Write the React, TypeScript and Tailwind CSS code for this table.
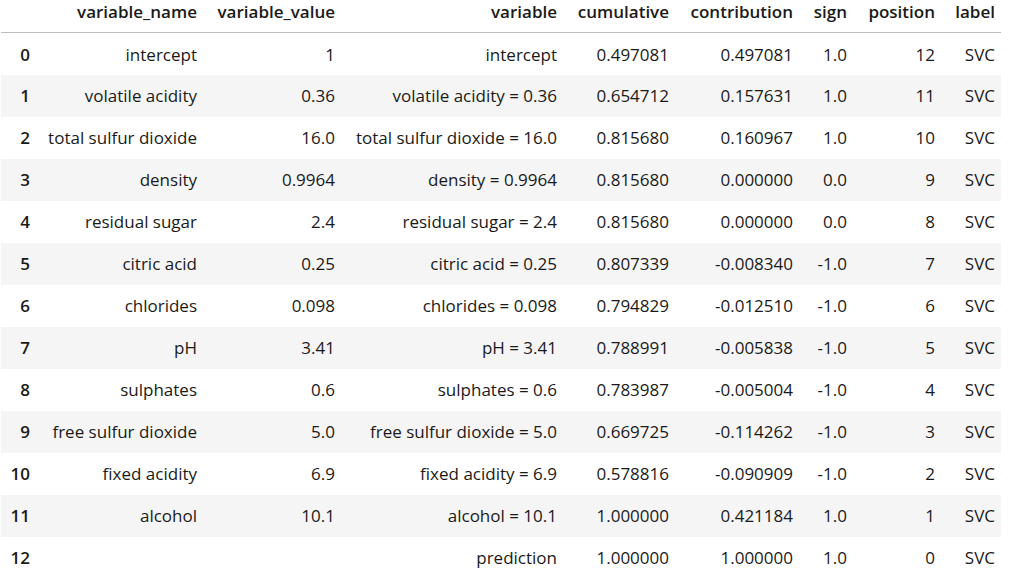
const columns = [
  "variable_name",
  "variable_value",
  "variable",
  "cumulative",
  "contribution",
  "sign",
  "position",
  "label",
];

const widths = ["w-[35px]", "w-[167px]", "w-[138px]", "w-[222px]", "w-[112px]", "w-[124px]", "w-[54px]", "w-[88px]", "w-[60px]"];

const rows: string[][] = [
  ["intercept", "1", "intercept", "0.497081", "0.497081", "1.0", "12", "SVC"],
  ["volatile acidity", "0.36", "volatile acidity = 0.36", "0.654712", "0.157631", "1.0", "11", "SVC"],
  ["total sulfur dioxide", "16.0", "total sulfur dioxide = 16.0", "0.815680", "0.160967", "1.0", "10", "SVC"],
  ["density", "0.9964", "density = 0.9964", "0.815680", "0.000000", "0.0", "9", "SVC"],
  ["residual sugar", "2.4", "residual sugar = 2.4", "0.815680", "0.000000", "0.0", "8", "SVC"],
  ["citric acid", "0.25", "citric acid = 0.25", "0.807339", "-0.008340", "-1.0", "7", "SVC"],
  ["chlorides", "0.098", "chlorides = 0.098", "0.794829", "-0.012510", "-1.0", "6", "SVC"],
  ["pH", "3.41", "pH = 3.41", "0.788991", "-0.005838", "-1.0", "5", "SVC"],
  ["sulphates", "0.6", "sulphates = 0.6", "0.783987", "-0.005004", "-1.0", "4", "SVC"],
  ["free sulfur dioxide", "5.0", "free sulfur dioxide = 5.0", "0.669725", "-0.114262", "-1.0", "3", "SVC"],
  ["fixed acidity", "6.9", "fixed acidity = 6.9", "0.578816", "-0.090909", "-1.0", "2", "SVC"],
  ["alcohol", "10.1", "alcohol = 10.1", "1.000000", "0.421184", "1.0", "1", "SVC"],
  ["", "", "prediction", "1.000000", "1.000000", "1.0", "0", "SVC"],
];

export default function App() {
  return (
    <div className="bg-white pl-[1px] font-['Open_Sans',sans-serif] text-[17px] text-[#1a1a1a]">
      <table className="table-fixed border-collapse">
        <thead>
          <tr className="border-b border-[#bdbdbd]">
            <th className={`${widths[0]} h-[32px]`}></th>
            {columns.map((c, i) => (
              <th key={c} className={`${widths[i + 1]} h-[32px] pr-[6px] pb-[8px] text-right align-middle font-semibold leading-[24px]`}>
                {c}
              </th>
            ))}
          </tr>
        </thead>
        <tbody>
          {rows.map((r, i) => (
            <tr key={i} className={i % 2 === 1 ? "bg-[#f5f5f5]" : "bg-white"}>
              <th className="h-[42px] pr-[6px] pt-[1px] text-right align-middle font-semibold">{i}</th>
              {r.map((v, j) => (
                <td key={j} className="h-[42px] pr-[6px] pt-[1px] text-right align-middle">
                  {v}
                </td>
              ))}
            </tr>
          ))}
        </tbody>
      </table>
    </div>
  );
}
